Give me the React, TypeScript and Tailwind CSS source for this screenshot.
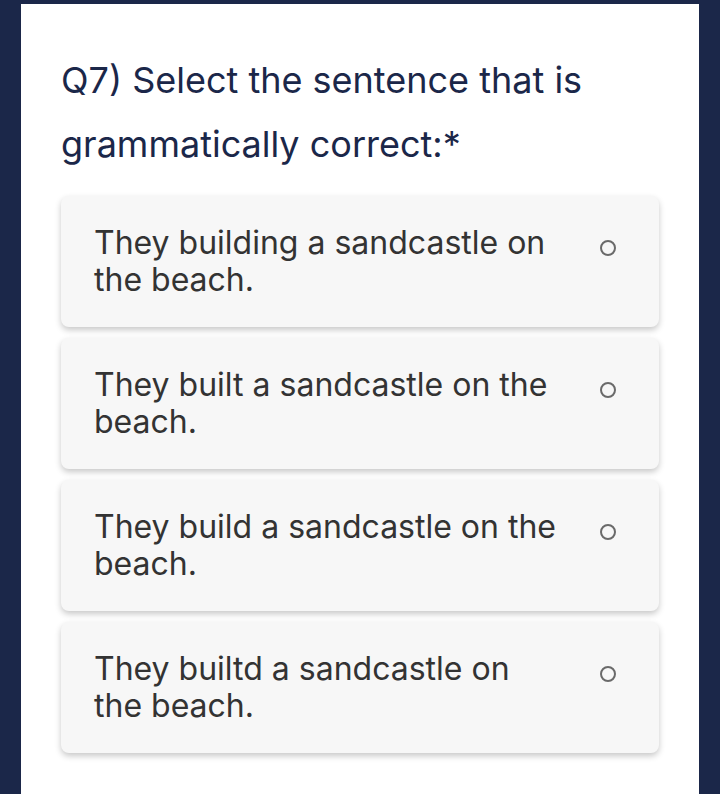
const options = [
  "They building a sandcastle on the beach.",
  "They built a sandcastle on the beach.",
  "They build a sandcastle on the beach.",
  "They builtd a sandcastle on the beach.",
]

export default function App() {
  return (
    <div className="min-h-[794px] bg-[#1b2749] px-[21px] pt-[4px] font-['Inter',sans-serif]">
      <div className="min-h-[790px] bg-white px-[40px] pt-[44px]">
        <h1 className="text-[36px] leading-[64px] text-[#1b2749] font-normal">
          Q7) Select the sentence that is
          <br />
          grammatically correct:*
        </h1>
        <div className="mt-[20px] flex flex-col gap-[11px]">
          {options.map((o) => (
            <label
              key={o}
              className="flex items-start justify-between rounded-[8px] bg-[#f7f7f7] pl-[33px] pr-[43px] pt-[28px] pb-[29px] shadow-[0_3px_6px_rgba(0,0,0,0.22)]"
            >
              <span className="w-[464px] text-[32px] leading-[37px] text-[#333333]">{o}</span>
              <span className="mt-[16px] h-[16px] w-[16px] rounded-full border-2 border-[#6a6a6a]" />
            </label>
          ))}
        </div>
      </div>
    </div>
  )
}
